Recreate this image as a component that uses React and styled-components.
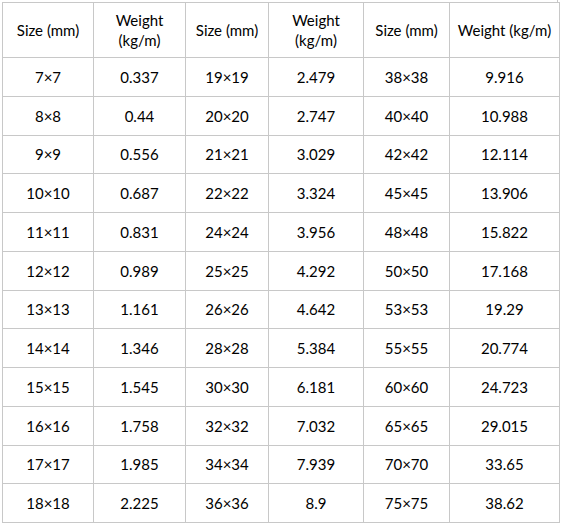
import React from "react";
import styled, { createGlobalStyle } from "styled-components";

const Global = createGlobalStyle`
  html, body { margin: 0; padding: 0; background: #ffffff; }
  body { font-family: Lato, "Open Sans", "Liberation Sans", sans-serif; }
`;

const Page = styled.div`
  padding: 2px 0 0 2px;
`;

const Table = styled.div`
  position: relative;
  display: grid;
  grid-template-columns: 91px 92px 83px 95px 86px 110px;
  grid-template-rows: 55px repeat(12, 38.75px);
  width: max-content;
  border-top: 1px solid #c8c8c8;
  border-left: 1px solid #c8c8c8;
  &::after {
    content: "";
    position: absolute;
    top: -3px;
    right: 2px;
    width: 1px;
    height: 3px;
    background: #c8c8c8;
  }
`;

const Cell = styled.div`
  display: flex;
  align-items: center;
  justify-content: center;
  text-align: center;
  border-right: 1px solid #c8c8c8;
  border-bottom: 1px solid #c8c8c8;
  font-size: 15px;
  line-height: 20px;
  color: #000000;
  white-space: nowrap;
  padding-bottom: ${(p) => (p.$head ? "1px" : "0")};
`;

const headers = [
  "Size (mm)",
  ["Weight", "(kg/m)"],
  "Size (mm)",
  ["Weight", "(kg/m)"],
  "Size (mm)",
  "Weight (kg/m)",
];

const rows = [
  ["7×7", "0.337", "19×19", "2.479", "38×38", "9.916"],
  ["8×8", "0.44", "20×20", "2.747", "40×40", "10.988"],
  ["9×9", "0.556", "21×21", "3.029", "42×42", "12.114"],
  ["10×10", "0.687", "22×22", "3.324", "45×45", "13.906"],
  ["11×11", "0.831", "24×24", "3.956", "48×48", "15.822"],
  ["12×12", "0.989", "25×25", "4.292", "50×50", "17.168"],
  ["13×13", "1.161", "26×26", "4.642", "53×53", "19.29"],
  ["14×14", "1.346", "28×28", "5.384", "55×55", "20.774"],
  ["15×15", "1.545", "30×30", "6.181", "60×60", "24.723"],
  ["16×16", "1.758", "32×32", "7.032", "65×65", "29.015"],
  ["17×17", "1.985", "34×34", "7.939", "70×70", "33.65"],
  ["18×18", "2.225", "36×36", "8.9", "75×75", "38.62"],
];

export default function App() {
  return (
    <Page>
      <Global />
      <Table>
        {headers.map((h, i) => (
          <Cell key={"h" + i} $head>
            {Array.isArray(h) ? (
              <span>
                {h[0]}
                <br />
                {h[1]}
              </span>
            ) : (
              h
            )}
          </Cell>
        ))}
        {rows.map((r, ri) =>
          r.map((v, ci) => <Cell key={ri + "-" + ci}>{v}</Cell>)
        )}
      </Table>
    </Page>
  );
}
